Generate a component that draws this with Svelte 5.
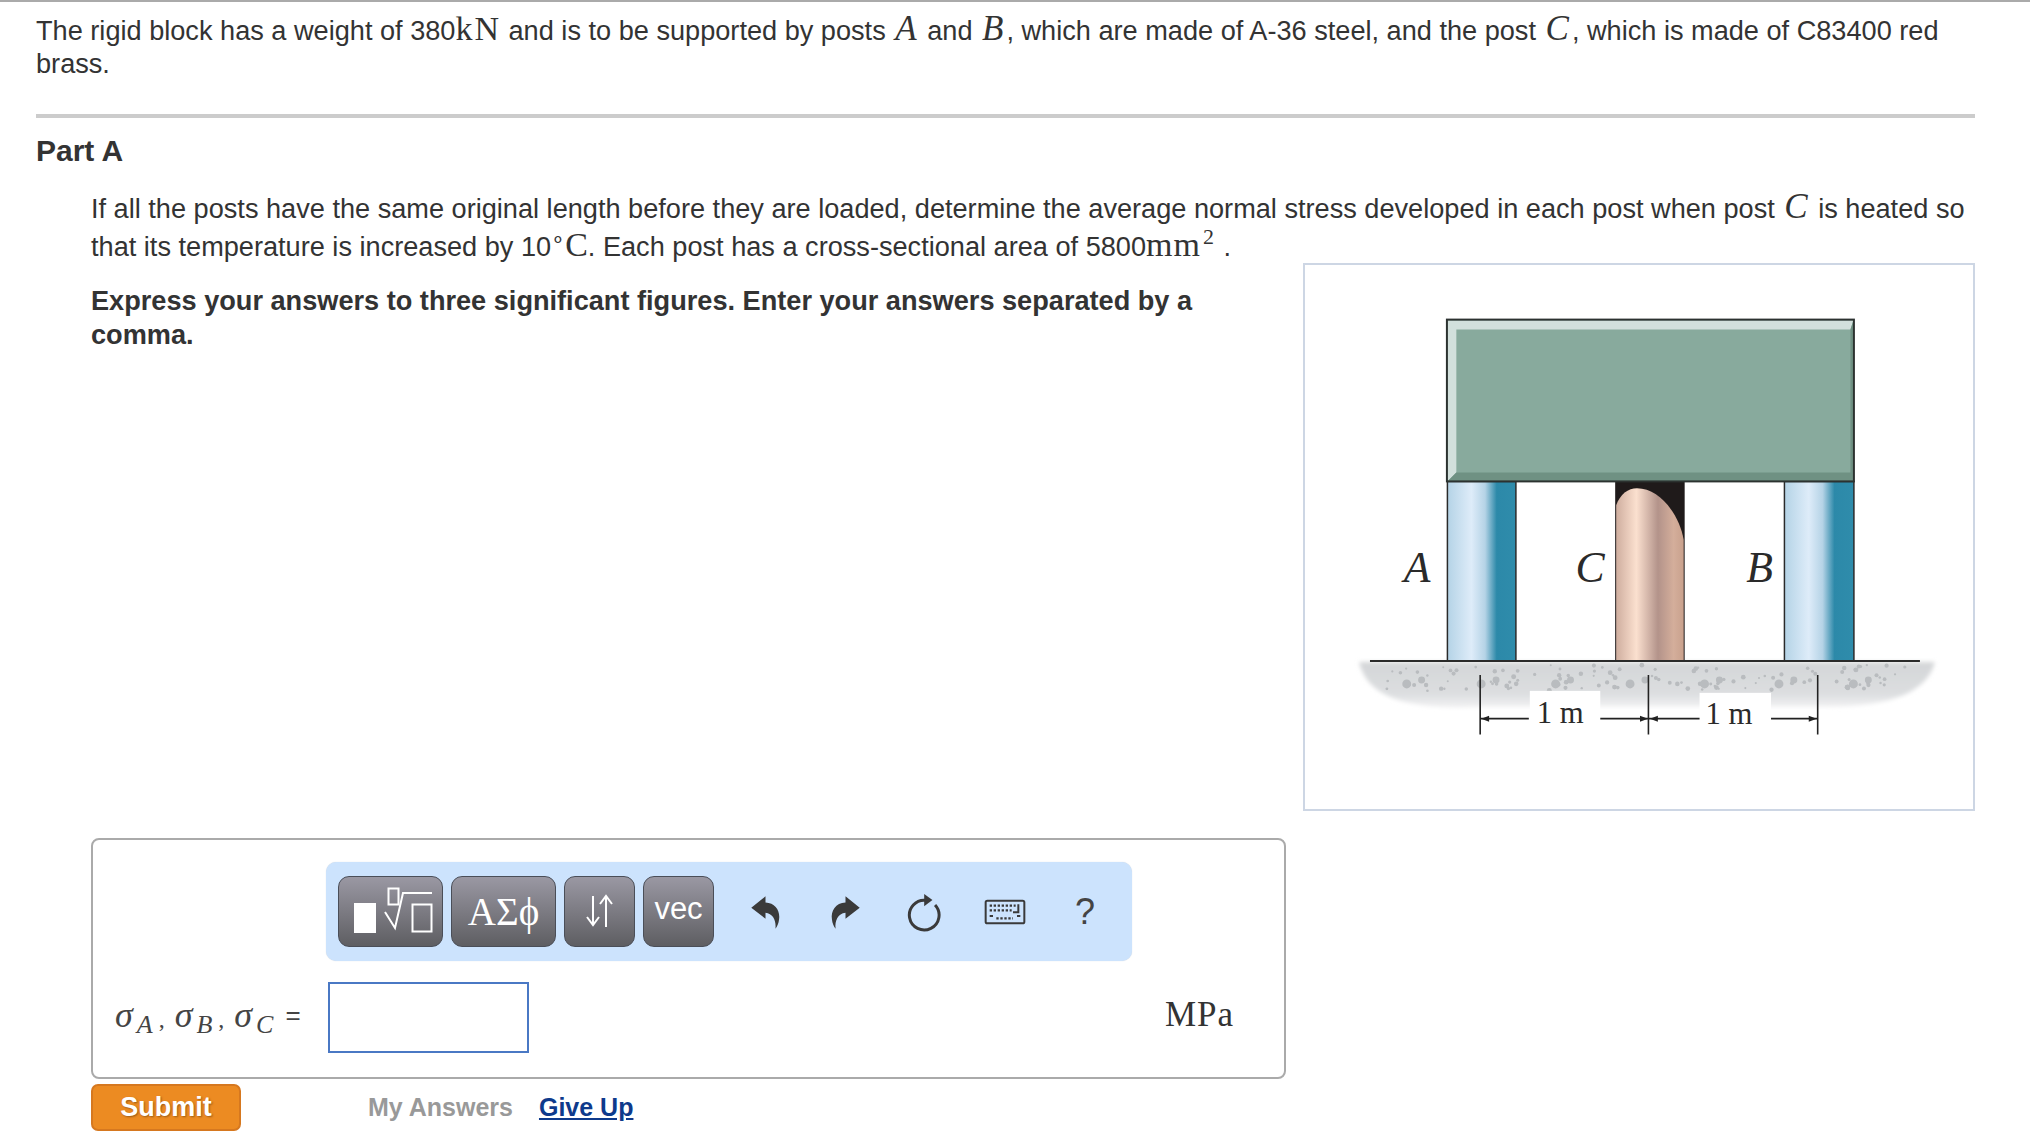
<script>
  const dots = [];
  let seed = 7;
  const rnd = () => ((seed = (seed * 16807) % 2147483647) / 2147483647);
  for (let i = 0; i < 120; i++) {
    const x = 1385 + rnd() * 525;
    const y = 666 + rnd() * 26;
    dots.push({ x, y, r: 1 + rnd() * 1.5 });
  }
  for (let x = 1405; x < 1890; x += 75) {
    dots.push({ x, y: 685, r: 4.5 });
    dots.push({ x: x + 15, y: 681, r: 3.5 });
  }
</script>

<div class="page">
  <p class="intro">The rigid block has a weight of 380<span class="m up kn">kN</span> and is to be supported by posts <span class="m it">A</span> and <span class="m it">B</span>, which are made of A-36 steel, and the post <span class="m it">C</span>, which is made of C83400 red brass.</p>
  <hr />
  <h2>Part A</h2>
  <div class="part">
    <p class="q">If all the posts have the same original length before they are loaded, determine the average normal stress developed in each post when post <span class="m it">C</span> is heated so that its temperature is increased by 10<sup class="deg">∘</sup><span class="m up">C</span>. Each post has a cross-sectional area of 5800<span class="m up mm">mm</span><sup class="sq">2</sup> .</p>
    <figure>
      <svg viewBox="1303 263 672 548" width="668" height="544">
        <defs>
          <linearGradient id="steel">
            <stop offset="0" stop-color="#b4d3e6" />
            <stop offset="0.35" stop-color="#deecf9" />
            <stop offset="0.55" stop-color="#b5d3e6" />
            <stop offset="0.72" stop-color="#2c89a9" />
            <stop offset="1" stop-color="#2f8cab" />
          </linearGradient>
          <linearGradient id="brass">
            <stop offset="0" stop-color="#cfae9f" />
            <stop offset="0.3" stop-color="#fbe0cf" />
            <stop offset="0.62" stop-color="#b3938a" />
            <stop offset="0.85" stop-color="#d4ae9b" />
            <stop offset="1" stop-color="#c9a18d" />
          </linearGradient>
          <linearGradient id="ground" x1="0" y1="0" x2="0" y2="1">
            <stop offset="0" stop-color="#d4d6d8" />
            <stop offset="0.7" stop-color="#dcdee0" />
            <stop offset="1" stop-color="#f2f2f3" />
          </linearGradient>
          <filter id="soft"><feGaussianBlur stdDeviation="0.7" /></filter>
          <filter id="softer"><feGaussianBlur stdDeviation="2" /></filter>
        </defs>
        <path d="M1357 663 H1937 C1930 692 1895 708 1830 708 H1480 C1405 712 1365 698 1357 663 Z" fill="url(#ground)" filter="url(#softer)" />
        <g filter="url(#soft)">
          {#each dots as d}
            <circle cx={d.x} cy={d.y} r={d.r} fill="#b9bcbf" />
          {/each}
        </g>
        <rect x="1529" y="692" width="71" height="24" fill="#fff" />
        <rect x="1700" y="694" width="72" height="24" fill="#fff" />
        <rect x="1446" y="481" width="69" height="181" fill="url(#steel)" stroke="#2a2a2a" stroke-width="1.5" />
        <rect x="1785.5" y="481" width="70" height="181" fill="url(#steel)" stroke="#2a2a2a" stroke-width="1.5" />
        <rect x="1615" y="481" width="70" height="181" fill="#1f1a1a" />
        <path d="M1616 662 V505 C1620 494 1628 488 1637 488 C1660 488 1680 515 1684 540 V662 Z" fill="url(#brass)" />
        <rect x="1445.5" y="318" width="410" height="163" fill="#88aa9d" />
        <path d="M1446 319 H1855 L1852 328 H1455 V472 L1446 481 Z" fill="#d2e0dc" />
        <path d="M1446 481 L1455 472 H1852 L1852 328 L1855 319 V481 Z" fill="#6f9183" />
        <rect x="1445.5" y="318" width="410" height="163" fill="none" stroke="#2c3230" stroke-width="2" />
        <path d="M1368 662 H1922" stroke="#2a2a2a" stroke-width="2" />
        <g stroke="#222" stroke-width="1.6" fill="none">
          <path d="M1479 676 V736 M1648.5 676 V736 M1819 676 V736" />
          <path d="M1479 720 H1528 M1600 720 H1648 M1649 720 H1700 M1772 720 H1819" />
        </g>
        <g fill="#222">
          <path d="M1480 720 l8 -3 v6 Z M1648 720 l-8 -3 v6 Z M1650 720 l8 -3 v6 Z M1818 720 l-8 -3 v6 Z" />
        </g>
        <text class="lbl" x="1402" y="582">A</text>
        <text class="lbl" x="1575" y="582">C</text>
        <text class="lbl" x="1747" y="582">B</text>
        <text class="dim" x="1536" y="724">1 m</text>
        <text class="dim" x="1706" y="725">1 m</text>
      </svg>
    </figure>
    <p class="bold">Express your answers to three significant figures. Enter your answers separated by a comma.</p>

    <div class="answer">
      <div class="toolbar">
        <div class="btn b1">
          <svg viewBox="0 0 105 71" width="105" height="71" fill="none" stroke="#fff" stroke-width="2">
            <rect x="16" y="27" width="22" height="30" fill="#fff" stroke="none" />
            <rect x="50.5" y="12.5" width="10" height="16" />
            <path d="M47 36 L57 52 L65 17 H94" />
            <rect x="74.5" y="28.5" width="19" height="27" />
          </svg>
        </div>
        <div class="btn b1 greek">ΑΣϕ</div>
        <div class="btn b2">
          <svg viewBox="0 0 71 71" width="71" height="71" fill="none" stroke="#fff" stroke-width="2">
            <path d="M29 20 V49 M23 41 L29 49 L35 41" />
            <path d="M42 51 V20 M36 28 L42 20 L48 28" />
          </svg>
        </div>
        <div class="btn b2 vec">vec</div>
        <div class="tool">
          <svg viewBox="50 110 110 115" width="37" height="38"><path d="M62 155 L105 120 V139 C135 140 150 165 146 190 C145 202 140 212 135 218 C138 195 128 172 105 170 V188 Z" fill="#3a3a3a" /></svg>
        </div>
        <div class="tool">
          <svg viewBox="50 110 110 115" width="37" height="38"><path transform="translate(210 0) scale(-1 1)" d="M62 155 L105 120 V139 C135 140 150 165 146 190 C145 202 140 212 135 218 C138 195 128 172 105 170 V188 Z" fill="#3a3a3a" /></svg>
        </div>
        <div class="tool">
          <svg viewBox="530 105 115 125" width="38" height="42" fill="none">
            <path d="M618 146 A45 45 0 1 1 590 132" stroke="#3a3a3a" stroke-width="9" />
            <path d="M585 113 L610 131 L585 150 Z" fill="#3a3a3a" />
          </svg>
        </div>
        <div class="tool">
          <svg viewBox="760 143 132 84" width="44" height="28" fill="none">
            <rect x="768" y="151" width="116" height="68" rx="5" stroke="#3a3a3a" stroke-width="6" />
            <path d="M780 166 H858 M780 180 H846 M800 204 H850" stroke="#3a3a3a" stroke-width="7" stroke-dasharray="7 5" />
            <path d="M780 197 H790 M862 197 H872 M866 162 V186 H850" stroke="#3a3a3a" stroke-width="6" />
          </svg>
        </div>
        <div class="tool help">?</div>
      </div>
      <div class="row">
        <div class="label">
          <span class="sig">σ</span><span class="sub">A</span><span class="comma">,</span><span class="sig">σ</span><span class="sub">B</span><span class="comma">,</span><span class="sig">σ</span><span class="sub">C</span><span class="eq">=</span>
        </div>
        <div class="input"></div>
        <div class="unit">MPa</div>
      </div>
    </div>
    <div class="actions">
      <div class="submit">Submit</div>
      <span class="mine">My Answers</span>
      <span class="giveup">Give Up</span>
    </div>
  </div>
</div>

<style>
  :global(body) {
    margin: 0;
    background: #fff;
  }
  .page {
    width: 2030px;
    height: 1145px;
    box-sizing: border-box;
    overflow: hidden;
    border-top: 2px solid #aaa;
    padding: 0 55px 0 36px;
    font-family: "Liberation Sans", Arial, sans-serif;
    font-size: 27.15px;
    color: #333;
  }
  p {
    margin: 0;
  }
  .intro {
    padding-top: 12px;
    line-height: 33px;
  }
  hr {
    border: 0;
    height: 4px;
    background: #ccc;
    margin: 34px 0 0;
  }
  h2 {
    margin: 12.5px 0 0;
    font-size: 30px;
    line-height: 40px;
    font-weight: bold;
  }
  .part {
    padding-left: 55px;
  }
  .q {
    margin-top: 19px;
    line-height: 38px;
    height: 73.5px;
  }
  .m {
    font-family: "Liberation Serif", serif;
    line-height: 0;
  }
  .it {
    font-style: italic;
    font-size: 35px;
    margin: 0 3px 0 2px;
  }
  .up {
    font-size: 34px;
  }
  .kn {
    letter-spacing: 2px;
  }
  .mm {
    letter-spacing: 1px;
  }
  .deg {
    font-family: "Liberation Serif", serif;
    font-size: 22px;
    line-height: 0;
    vertical-align: 10px;
  }
  .sq {
    font-family: "Liberation Serif", serif;
    font-size: 22px;
    line-height: 0;
    vertical-align: 12px;
    margin: 0 2px;
  }
  figure {
    float: right;
    margin: 0 0 27px 16px;
    width: 668px;
    height: 544px;
    border: 2px solid #cdd6e4;
  }
  figure svg {
    display: block;
  }
  .lbl {
    font-family: "Liberation Serif", serif;
    font-style: italic;
    font-size: 44px;
    fill: #2a2a2a;
  }
  .dim {
    font-family: "Liberation Serif", serif;
    font-size: 31px;
    fill: #2a2a2a;
  }
  .bold {
    font-weight: bold;
    line-height: 33.5px;
    padding-top: 21px;
  }
  .answer {
    clear: both;
    box-sizing: border-box;
    width: 1195px;
    height: 241px;
    border: 2px solid #aaa;
    border-radius: 8px;
    padding: 22px 0 0 233px;
  }
  .toolbar {
    box-sizing: border-box;
    width: 806px;
    height: 99px;
    background: #cce3fd;
    border-radius: 10px;
    padding: 14px 0 0 12px;
    display: flex;
    align-items: flex-start;
    gap: 8px;
    box-shadow: 0 0 1px #c8d0da;
  }
  .btn {
    box-sizing: border-box;
    height: 71px;
    border-radius: 11px;
    border: 1px solid #4a4e58;
    background: linear-gradient(#9a98a3, #5e5e62);
    color: #fff;
    display: flex;
    align-items: center;
    justify-content: center;
    overflow: hidden;
  }
  .btn svg {
    flex: none;
  }
  .b1 {
    width: 105px;
  }
  .b2 {
    width: 71px;
  }
  .greek {
    font-family: "Liberation Serif", serif;
    font-size: 39px;
  }
  .vec {
    font-size: 31px;
    padding-bottom: 6px;
  }
  .tool {
    width: 72px;
    height: 71px;
    flex: none;
    display: flex;
    align-items: center;
    justify-content: center;
    color: #444;
  }
  .tool:nth-child(5) {
    margin-left: 7px;
  }
  .help {
    font-size: 36px;
    padding-bottom: 2px;
  }
  .row {
    display: flex;
    align-items: center;
    margin: 21px 0 0 -233px;
    height: 70px;
    padding-right: 50px;
  }
  .label {
    box-sizing: border-box;
    width: 235px;
    padding: 0 0 5px 22px;
    font-family: "Liberation Serif", serif;
    color: #444;
    white-space: nowrap;
  }
  .sig {
    font-style: italic;
    font-size: 36px;
  }
  .sub {
    font-style: italic;
    font-size: 26px;
    position: relative;
    top: 6px;
    margin: 0 2px 0 4px;
  }
  .comma {
    font-size: 24px;
    margin: 0 10px 0 4px;
  }
  .eq {
    font-family: "Liberation Sans", sans-serif;
    font-size: 26px;
    margin-left: 10px;
    position: relative;
    top: -3px;
  }
  .input {
    box-sizing: border-box;
    width: 201px;
    height: 71px;
    border: 2px solid #4a78c4;
    background: #fff;
  }
  .unit {
    margin-left: auto;
    font-family: "Liberation Serif", serif;
    font-size: 35px;
    letter-spacing: 1px;
    color: #333;
    padding-bottom: 5px;
  }
  .actions {
    display: flex;
    align-items: center;
    margin-top: 5px;
  }
  .submit {
    box-sizing: border-box;
    width: 150px;
    height: 47px;
    border: 2px solid #d6781f;
    border-radius: 7px;
    background: #ec8b22;
    color: #fff;
    font-weight: bold;
    font-size: 27px;
    display: flex;
    align-items: center;
    justify-content: center;
    text-shadow: 1px 1px 2px #9c5a14;
  }
  .mine {
    margin-left: 127px;
    color: #999;
    font-weight: bold;
    font-size: 25px;
  }
  .giveup {
    margin-left: 26px;
    color: #0e3a8c;
    font-weight: bold;
    font-size: 25px;
    text-decoration: underline;
  }
</style>
